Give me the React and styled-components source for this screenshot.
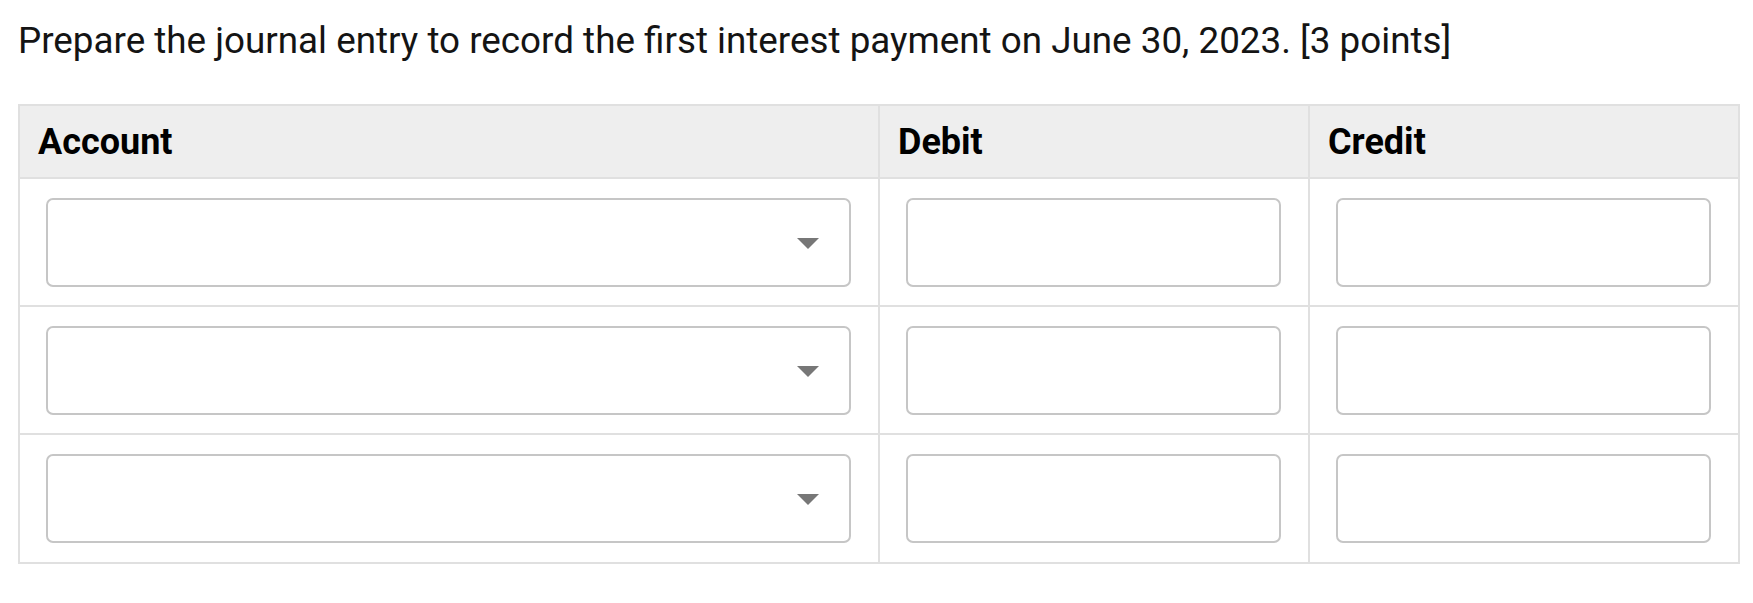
import React from 'react'
import styled, { createGlobalStyle } from 'styled-components'

const GlobalStyle = createGlobalStyle`
  body {
    margin: 0;
    background: #ffffff;
    font-family: Roboto, "Liberation Sans", Arial, sans-serif;
    color: #111111;
  }
`

const Page = styled.div`
  padding: 19px 13px 0 18px;
`

const Title = styled.p`
  margin: 0 0 41px 0;
  font-size: 36.8px;
  line-height: 44px;
  font-weight: 400;
  color: #141414;
  white-space: nowrap;
`

const Grid = styled.div`
  width: 1722px;
  box-sizing: border-box;
  border: 2px solid #e0e0e0;
  display: grid;
  grid-template-columns: 860px 430px 428px;
`

const HeadCell = styled.div`
  box-sizing: border-box;
  height: 73px;
  background: #eeeeee;
  border-bottom: 2px solid #e0e0e0;
  border-right: ${p => (p.$last ? 'none' : '2px solid #e0e0e0')};
  padding: 0 18px;
  display: flex;
  align-items: center;
  font-size: 36px;
  font-weight: 700;
  color: #000000;
`

const Cell = styled.div`
  box-sizing: border-box;
  height: ${p => (p.$lastRow ? '127px' : '128px')};
  border-bottom: ${p => (p.$lastRow ? 'none' : '2px solid #e0e0e0')};
  border-right: ${p => (p.$last ? 'none' : '2px solid #e0e0e0')};
  padding: 19px 27px 0 26px;
`

const Field = styled.div`
  box-sizing: border-box;
  height: 89px;
  border: 2px solid #c6c6c6;
  border-radius: 7px;
  background: #ffffff;
`

const SelectBox = styled(Field)`
  display: flex;
  align-items: center;
  justify-content: flex-end;
  padding: 2px 30px 0 0;
`

const Caret = styled.span`
  width: 0;
  height: 0;
  border-left: 11px solid transparent;
  border-right: 11px solid transparent;
  border-top: 11px solid #777777;
`

const rows = [0, 1, 2]

export default function App() {
  return (
    <>
      <GlobalStyle />
      <Page>
        <Title>Prepare the journal entry to record the first interest payment on June 30, 2023. [3 points]</Title>
        <Grid>
          <HeadCell>Account</HeadCell>
          <HeadCell>Debit</HeadCell>
          <HeadCell $last>Credit</HeadCell>
          {rows.map(i => {
            const lastRow = i === rows.length - 1
            return (
              <React.Fragment key={i}>
                <Cell $lastRow={lastRow}>
                  <SelectBox>
                    <Caret />
                  </SelectBox>
                </Cell>
                <Cell $lastRow={lastRow}>
                  <Field />
                </Cell>
                <Cell $lastRow={lastRow} $last>
                  <Field />
                </Cell>
              </React.Fragment>
            )
          })}
        </Grid>
      </Page>
    </>
  )
}
